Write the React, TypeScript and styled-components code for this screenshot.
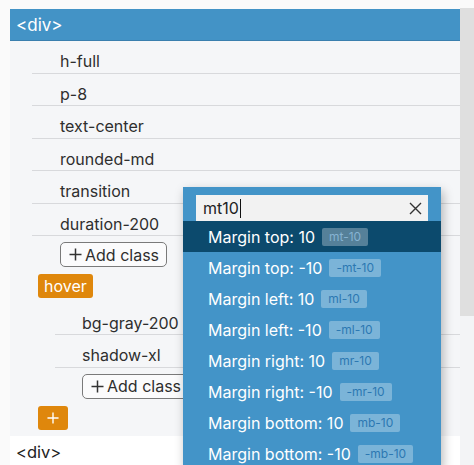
import React from "react";
import styled, { createGlobalStyle } from "styled-components";

const Global = createGlobalStyle`
  html, body { margin: 0; padding: 0; }
  body {
    font-family: "Inter", "Noto Sans", sans-serif;
    background: #fafafa;
  }
  * { box-sizing: border-box; }
`;

const Page = styled.div`
  position: relative;
  display: flex;
  height: 465px;
  overflow: hidden;
  background: #fafafa;
`;

const Main = styled.div`
  flex: 1;
  display: flex;
  flex-direction: column;
  padding: 9px 0 0 10px;
`;

const Panel = styled.div`
  flex: 1;
  display: flex;
  flex-direction: column;
  background: #f5f6f8;
`;

const Header = styled.div`
  height: 32px;
  flex: none;
  display: flex;
  align-items: center;
  padding: 1px 0 0 6px;
  background: #4393c6;
  border-bottom: 1px solid #3a7fae;
  color: #fff;
  font-size: 17px;
`;

const ClassList = styled.div<{ $indent: number; $top?: number }>`
  margin-left: ${(p) => p.$indent}px;
  margin-top: ${(p) => p.$top ?? 0}px;
  display: flex;
  flex-direction: column;
`;

const ClassRow = styled.div<{ $pad: number }>`
  height: 32.5px;
  padding: 10px 0 0 ${(p) => p.$pad}px;
  line-height: 20px;
  font-size: 16px;
  color: #2e2e2e;
  border-bottom: 1px solid #d8d9dc;
`;

const AddButton = styled.div<{ $left: number }>`
  align-self: flex-start;
  margin: 6px 0 0 ${(p) => p.$left}px;
  height: 25px;
  display: inline-flex;
  align-items: center;
  gap: 3px;
  padding: 0 7px 0 8px;
  border: 1px solid #7a7a7a;
  border-radius: 5px;
  background: #fbfbfc;
  color: #2e2e2e;
  font-size: 16px;
`;

const Badge = styled.div`
  align-self: flex-start;
  margin: 7px 0 0 28px;
  height: 24px;
  display: inline-flex;
  align-items: center;
  justify-content: center;
  padding: 0 6px;
  min-width: 30px;
  background: #df870c;
  color: #fff;
  border-radius: 3px;
  font-size: 16px;
`;

const Footer = styled.div`
  margin-top: 6px;
  flex: 1;
  background: #fff;
  padding: 6px 0 0 6px;
  line-height: 20px;
  color: #222;
  font-size: 16.5px;
`;

const Scrollbar = styled.div`
  width: 14px;
  flex: none;
  display: flex;
  flex-direction: column;
  padding-top: 8px;
  background: #fafafa;
`;

const Thumb = styled.div`
  height: 308px;
  background: #dfdfdf;
`;

const Track = styled.div`
  flex: 1;
  background: #f3f4f6;
`;

const Popup = styled.div`
  position: absolute;
  left: 183px;
  top: 187px;
  width: 258px;
  padding-top: 8px;
  background: #4394c8;
  box-shadow: 2px 4px 10px rgba(0, 0, 0, 0.28);
  display: flex;
  flex-direction: column;
`;

const SearchBox = styled.div`
  margin: 0 13px;
  height: 26px;
  display: flex;
  align-items: center;
  padding: 0 6px 0 7px;
  background: #f2f2f2;
  color: #222;
  font-size: 16px;
`;

const SearchText = styled.span`
  flex: 1;
  display: flex;
  align-items: center;
`;

const Caret = styled.span`
  display: inline-block;
  width: 1px;
  height: 19px;
  margin-left: 1px;
  background: #111;
`;

const Item = styled.div<{ $active?: boolean }>`
  height: 31px;
  flex: none;
  display: flex;
  align-items: center;
  gap: 7px;
  padding-left: 25px;
  background: ${(p) => (p.$active ? "#0c4a6d" : "transparent")};
  color: #fff;
  font-size: 16px;
`;

const Tag = styled.span<{ $active?: boolean }>`
  height: 18px;
  display: inline-flex;
  align-items: center;
  padding: 0 7px;
  border-radius: 2px;
  background: rgba(255, 255, 255, 0.3);
  color: ${(p) => (p.$active ? "#86b3d2" : "#2c78b2")};
  font-size: 12px;
`;

const PlusIcon = ({ color = "#333", size = 13 }: { color?: string; size?: number }) => (
  <svg width={size} height={size} viewBox="0 0 13 13">
    <path d="M6.5 0.5v12M0.5 6.5h12" stroke={color} strokeWidth="1.5" fill="none" />
  </svg>
);

const CloseIcon = () => (
  <svg width="13" height="13" viewBox="0 0 13 13">
    <path d="M1 1l11 11M12 1L1 12" stroke="#333" strokeWidth="1.4" fill="none" />
  </svg>
);

const baseClasses = ["h-full", "p-8", "text-center", "rounded-md", "transition", "duration-200"];
const hoverClasses = ["bg-gray-200", "shadow-xl"];

const items = [
  ["Margin top: 10", "mt-10"],
  ["Margin top: -10", "-mt-10"],
  ["Margin left: 10", "ml-10"],
  ["Margin left: -10", "-ml-10"],
  ["Margin right: 10", "mr-10"],
  ["Margin right: -10", "-mr-10"],
  ["Margin bottom: 10", "mb-10"],
  ["Margin bottom: -10", "-mb-10"],
];

export default function App() {
  return (
    <>
      <Global />
      <Page>
        <Main>
          <Panel>
            <Header>&lt;div&gt;</Header>
            <ClassList $indent={22}>
              {baseClasses.map((c) => (
                <ClassRow key={c} $pad={28}>
                  {c}
                </ClassRow>
              ))}
            </ClassList>
            <AddButton $left={50}>
              <PlusIcon />
              Add class
            </AddButton>
            <Badge>hover</Badge>
            <ClassList $indent={45} $top={4.5}>
              {hoverClasses.map((c) => (
                <ClassRow key={c} $pad={27}>
                  {c}
                </ClassRow>
              ))}
            </ClassList>
            <AddButton $left={72}>
              <PlusIcon />
              Add class
            </AddButton>
            <Badge>
              <PlusIcon color="#fff" size={12} />
            </Badge>
            <Footer>&lt;div&gt;</Footer>
          </Panel>
        </Main>
        <Scrollbar>
          <Thumb />
          <Track />
        </Scrollbar>
        <Popup>
          <SearchBox>
            <SearchText>
              mt10
              <Caret />
            </SearchText>
            <CloseIcon />
          </SearchBox>
          {items.map(([label, cls], i) => (
            <Item key={cls} $active={i === 0}>
              {label}
              <Tag $active={i === 0}>{cls}</Tag>
            </Item>
          ))}
        </Popup>
      </Page>
    </>
  );
}
